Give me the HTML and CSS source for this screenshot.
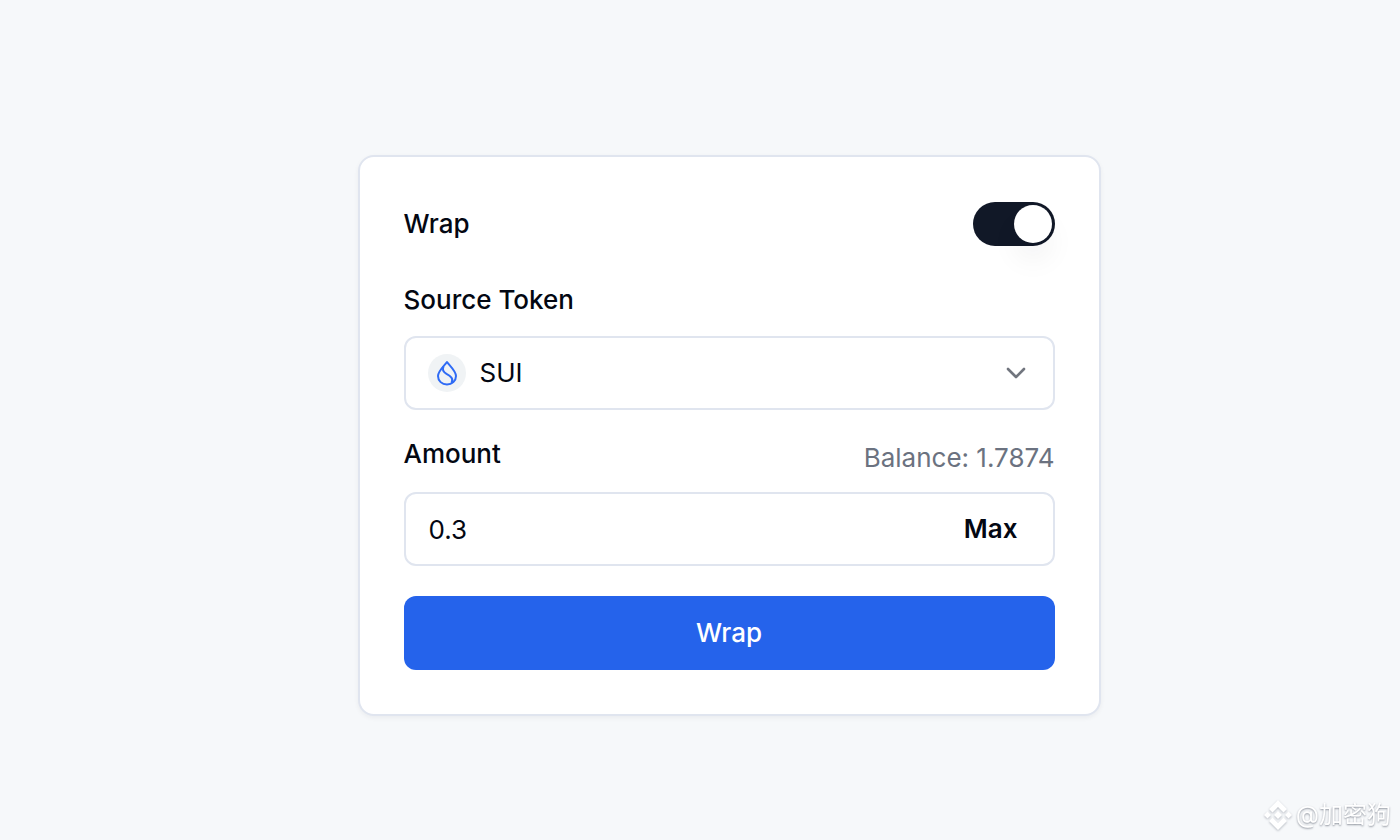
FILE: index.html
```html
<!DOCTYPE html>
<html lang="en">
<head>
    <meta charset="UTF-8">
    <meta name="viewport" content="width=device-width, initial-scale=1.0">
    <title>Wrap</title>
    <link rel="stylesheet" href="styles.css">
</head>
<body>
    <main class="page">
        <form class="card">
            <div class="row">
                <label class="label" for="wrapToggle">Wrap</label>
                <input type="checkbox" role="switch" id="wrapToggle" class="switch" checked>
            </div>

            <div class="field">
                <label class="label" for="sourceToken">Source Token</label>
                <div class="control">
                    <span class="token-icon">
                        <svg viewBox="0 0 38 38" fill="none" stroke="#2f6bf5" stroke-width="2" stroke-linejoin="round" aria-hidden="true">
                            <path d="M19 8C16 12 10 17 10 22C10 27 14 30.500 19 30.500C24 30.500 28 27 28 22C28 17 22 12 19 8Z"/>
                            <path d="M15.500 12.500C14 15.500 15.500 18 18.500 19.800C22.500 22 26 24.500 23.500 29"/>
                        </svg>
                    </span>
                    <select id="sourceToken" class="box token-select">
                        <option>SUI</option>
                    </select>
                    <svg class="chevron" viewBox="0 0 20 20" fill="none" stroke="#71757e" stroke-width="2.600" stroke-linecap="round" stroke-linejoin="round" aria-hidden="true">
                        <path d="M2 6l8 8 8-8"/>
                    </svg>
                </div>
            </div>

            <div class="field amount">
                <div class="row amount-head">
                    <label class="label" for="amount">Amount</label>
                    <span class="balance">Balance: 1.7874</span>
                </div>
                <div class="control">
                    <input type="text" id="amount" class="box" inputmode="decimal" value="0.3">
                    <button type="button" class="max">Max</button>
                </div>
            </div>

            <button type="button" class="submit">Wrap</button>
        </form>
    </main>

    <div class="watermark">
        <svg viewBox="0 0 28 30" fill="#fff" aria-hidden="true">
            <path d="M14 0l9 9-3.500 3.500-5.500-5.500-5.500 5.500L5 9z"/>
            <path d="M14 11l4 4-4 4-4-4z"/>
            <path d="M3.500 11.500L7 15l-3.500 3.500L0 15z"/>
            <path d="M24.500 11.500L28 15l-3.500 3.500L21 15z"/>
            <path d="M14 30l9-9-3.500-3.500-5.500 5.500-5.500-5.500L5 21z"/>
        </svg>
        <span>@加密狗</span>
    </div>
</body>
</html>
```
FILE: styles.css
```css
:root {
    --bg: #f6f8fa;
    --card: #ffffff;
    --text: #030712;
    --muted: #6b7280;
    --border: #e0e5ef;
    --accent: #2563eb;
    --dark: #111827;
}

* {
    box-sizing: border-box;
}

body {
    margin: 0;
    background: var(--bg);
    color: var(--text);
    font-family: Inter, "Noto Sans CJK SC", sans-serif;
    font-size: 26px;
    line-height: 28px;
}

.page {
    min-height: 100vh;
    display: flex;
    align-items: center;
    justify-content: center;
    padding: 31px 0 0 58px;
}

.card {
    width: 100%;
    max-width: 743px;
    padding: 45px 44px 44px;
    background: var(--card);
    border: 2px solid var(--border);
    border-radius: 16px;
    box-shadow: 0 2px 5px rgba(15, 23, 42, 0.05);
}

.row {
    display: flex;
    align-items: center;
    justify-content: space-between;
}

.label {
    display: block;
    font-weight: 500;
}

.switch {
    appearance: none;
    width: 82px;
    height: 44px;
    margin: 0;
    padding: 3px;
    display: flex;
    border-radius: 22px;
    background: var(--dark);
}

.switch::before {
    content: "";
    width: 38px;
    height: 38px;
    border-radius: 50%;
    background: #fff;
    box-shadow: 0 18px 28px rgba(15, 23, 42, 0.05);
}

.switch:checked {
    justify-content: flex-end;
}

.field {
    display: grid;
    gap: 22px;
    margin-top: 40px;
}

.amount {
    gap: 16px;
    margin-top: 30px;
}

.amount-head {
    align-items: flex-start;
}

.balance {
    color: var(--muted);
    line-height: 36px;
}

.control {
    position: relative;
}

.box {
    appearance: none;
    display: block;
    width: 100%;
    height: 74px;
    padding: 0 23px;
    border: 2px solid var(--border);
    border-radius: 12px;
    background: transparent;
    color: var(--text);
    font: inherit;
}

.token-select {
    padding-left: 74px;
}

.token-icon {
    position: absolute;
    top: 18px;
    left: 24px;
    width: 38px;
    height: 38px;
    border-radius: 50%;
    background: #f0f3f5;
}

.chevron {
    position: absolute;
    top: 27px;
    right: 29px;
    width: 20px;
    height: 20px;
    pointer-events: none;
}

.max {
    position: absolute;
    top: 2px;
    right: 2px;
    height: 70px;
    padding: 0 35px;
    border: 0;
    background: none;
    color: var(--text);
    font: inherit;
    font-weight: 600;
}

.submit {
    width: 100%;
    height: 74px;
    margin-top: 30px;
    border: 0;
    border-radius: 12px;
    background: var(--accent);
    color: #fff;
    font: inherit;
    font-weight: 500;
}

.watermark {
    position: fixed;
    right: 9px;
    bottom: 10px;
    display: flex;
    align-items: center;
    gap: 4px;
    color: #fff;
    font-size: 24px;
    line-height: 30px;
    text-shadow: 0 1px 2px #8d929c;
}

.watermark svg {
    width: 28px;
    height: 30px;
    filter: drop-shadow(0 1px 1px #b4b8c0);
}
```
